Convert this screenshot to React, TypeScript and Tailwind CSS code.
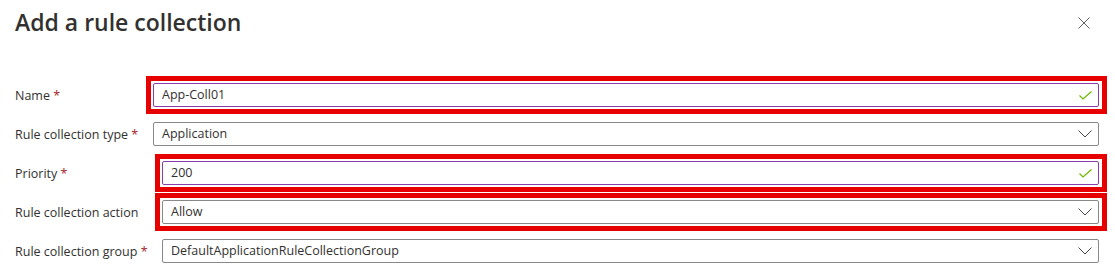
import React from "react";

type Field = {
  label: string;
  required: boolean;
  value: string;
  kind: "text" | "select";
  highlight: boolean;
  labelWidth: string;
  focused?: boolean;
};

function CheckIcon() {
  return (
    <svg width="13" height="9" viewBox="0 0 13 9" fill="none">
      <path d="M0.5 4.5 L4 8 L12.5 0.5" stroke="#6bb700" strokeWidth="1.2" />
    </svg>
  );
}

function ChevronIcon() {
  return (
    <svg width="14" height="8" viewBox="0 0 14 8" fill="none">
      <path d="M0.5 0.5 L7 7 L13.5 0.5" stroke="#484644" strokeWidth="1" />
    </svg>
  );
}

function Box({ value, kind, focused }: { value: string; kind: "text" | "select"; focused?: boolean }) {
  return (
    <div
      className={`flex h-[24px] flex-1 items-center justify-between rounded-[2px] border pl-[8px] pr-[6px] ${
        focused ? "border-[#8a3ca8]" : "border-[#8a8886]"
      }`}
    >
      <span className="text-[12.5px] leading-none text-[#323130]">{value}</span>
      {kind === "text" ? <CheckIcon /> : <ChevronIcon />}
    </div>
  );
}

function Row({ f }: { f: Field }) {
  return (
    <div className="flex items-center">
      <label className={`${f.labelWidth} shrink-0 pt-[2px] text-[12.5px] text-[#323130]`}>
        {f.label}
        {f.required && <span className="text-[#a4262c]"> *</span>}
      </label>
      {f.highlight ? (
        <div className="mr-[8px] flex flex-1 border-[5px] border-[#e60000] py-[2px] pl-[2px] pr-[3px]">
          <Box value={f.value} kind={f.kind} focused={f.focused} />
        </div>
      ) : (
        <div className="ml-[7px] mr-[16px] flex flex-1">
          <Box value={f.value} kind={f.kind} />
        </div>
      )}
    </div>
  );
}

export default function App() {
  const fields: Field[] = [
    { label: "Name", required: true, value: "App-Coll01", kind: "text", highlight: true, focused: true, labelWidth: "w-[131px]" },
    { label: "Rule collection type", required: true, value: "Application", kind: "select", highlight: false, labelWidth: "w-[131px]" },
    { label: "Priority", required: true, value: "200", kind: "text", highlight: true, focused: true, labelWidth: "w-[140px]" },
    { label: "Rule collection action", required: false, value: "Allow", kind: "select", highlight: true, labelWidth: "w-[140px]" },
    { label: "Rule collection group", required: true, value: "DefaultApplicationRuleCollectionGroup", kind: "select", highlight: false, labelWidth: "w-[140px]" },
  ];

  return (
    <div className="h-[276px] w-[1115px] overflow-hidden bg-white font-['Segoe_UI','Open_Sans',sans-serif] text-[#323130]">
      {/* header */}
      <div className="flex h-[76px] items-start justify-between pl-[15px] pr-[25px]">
        <h1 className="pt-[6px] text-[23px] font-semibold leading-[32px]">Add a rule collection</h1>
        <button className="mt-[17px]">
          <svg width="12" height="12" viewBox="0 0 12 12" fill="none">
            <path d="M0.5 0.5 L11.5 11.5 M11.5 0.5 L0.5 11.5" stroke="#605e5c" strokeWidth="1" />
          </svg>
        </button>
      </div>

      {/* form */}
      <div className="flex flex-col pl-[15px]">
        <Row f={fields[0]} />
        <div className="mt-[8px]">
          <Row f={fields[1]} />
        </div>
        <div className="mt-[8px]">
          <Row f={fields[2]} />
        </div>
        <div className="mt-[1px]">
          <Row f={fields[3]} />
        </div>
        <div className="mt-[8px]">
          <Row f={fields[4]} />
        </div>
      </div>
    </div>
  );
}
